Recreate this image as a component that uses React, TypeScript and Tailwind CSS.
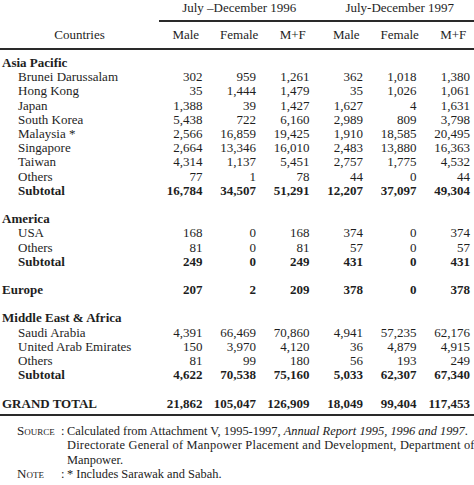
type Row = {
  label: string;
  vals?: string[];
  kind: "cat" | "item" | "sub" | "blank" | "grand";
};

const rows: Row[] = [
  { label: "Asia Pacific", kind: "cat" },
  { label: "Brunei Darussalam", kind: "item", vals: ["302", "959", "1,261", "362", "1,018", "1,380"] },
  { label: "Hong Kong", kind: "item", vals: ["35", "1,444", "1,479", "35", "1,026", "1,061"] },
  { label: "Japan", kind: "item", vals: ["1,388", "39", "1,427", "1,627", "4", "1,631"] },
  { label: "South Korea", kind: "item", vals: ["5,438", "722", "6,160", "2,989", "809", "3,798"] },
  { label: "Malaysia *", kind: "item", vals: ["2,566", "16,859", "19,425", "1,910", "18,585", "20,495"] },
  { label: "Singapore", kind: "item", vals: ["2,664", "13,346", "16,010", "2,483", "13,880", "16,363"] },
  { label: "Taiwan", kind: "item", vals: ["4,314", "1,137", "5,451", "2,757", "1,775", "4,532"] },
  { label: "Others", kind: "item", vals: ["77", "1", "78", "44", "0", "44"] },
  { label: "Subtotal", kind: "sub", vals: ["16,784", "34,507", "51,291", "12,207", "37,097", "49,304"] },
  { label: "", kind: "blank" },
  { label: "America", kind: "cat" },
  { label: "USA", kind: "item", vals: ["168", "0", "168", "374", "0", "374"] },
  { label: "Others", kind: "item", vals: ["81", "0", "81", "57", "0", "57"] },
  { label: "Subtotal", kind: "sub", vals: ["249", "0", "249", "431", "0", "431"] },
  { label: "", kind: "blank" },
  { label: "Europe", kind: "grand", vals: ["207", "2", "209", "378", "0", "378"] },
  { label: "", kind: "blank" },
  { label: "Middle East & Africa", kind: "cat" },
  { label: "Saudi Arabia", kind: "item", vals: ["4,391", "66,469", "70,860", "4,941", "57,235", "62,176"] },
  { label: "United Arab Emirates", kind: "item", vals: ["150", "3,970", "4,120", "36", "4,879", "4,915"] },
  { label: "Others", kind: "item", vals: ["81", "99", "180", "56", "193", "249"] },
  { label: "Subtotal", kind: "sub", vals: ["4,622", "70,538", "75,160", "5,033", "62,307", "67,340"] },
  { label: "", kind: "blank" },
  { label: "GRAND TOTAL", kind: "grand", vals: ["21,862", "105,047", "126,909", "18,049", "99,404", "117,453"] },
];

const heads = ["Male", "Female", "M+F", "Male", "Female", "M+F"];

export default function App() {
  return (
    <div className="w-[474px] h-[485px] overflow-hidden bg-white text-[#1e1e1e] font-['Liberation_Serif',serif]">
      <table className="w-[480px] table-fixed border-collapse text-[13px]">
        <colgroup>
          <col className="w-[159px]" />
          {heads.map((_, i) => (
            <col key={i} className="w-[53.5px]" />
          ))}
        </colgroup>
        <thead>
          <tr className="h-[21px]">
            <th className="font-normal"></th>
            <th colSpan={3} className="font-normal text-center align-top leading-[15px] border-b-[2px] border-[#2a2a2a]">
              July –December 1996
            </th>
            <th colSpan={3} className="font-normal text-center align-top leading-[15px] border-b-[2px] border-[#2a2a2a]">
              July-December 1997
            </th>
          </tr>
          <tr className="h-[28px] border-b-[2px] border-[#2a2a2a]">
            <th className="font-normal text-center">Countries</th>
            {heads.map((h, i) => (
              <th key={i} className="font-normal text-center">
                {h}
              </th>
            ))}
          </tr>
        </thead>
        <tbody>
          <tr className="h-[7px]">
            <td colSpan={7}></td>
          </tr>
          {rows.map((r, i) => {
            const bold = r.kind === "cat" || r.kind === "sub" || r.kind === "grand";
            return (
              <tr key={i} className={`h-[14.2px] leading-[14px] ${bold ? "font-bold" : ""}`}>
                <td className={`whitespace-nowrap ${r.kind === "item" || r.kind === "sub" ? "pl-[18px]" : "pl-[2px]"}`}>
                  {r.label}
                </td>
                {(r.vals ?? ["", "", "", "", "", ""]).map((v, j) => (
                  <td key={j} className="text-right pr-[10px]">
                    {v}
                  </td>
                ))}
              </tr>
            );
          })}
          <tr className="h-[4px] border-b-[2px] border-[#2a2a2a]">
            <td colSpan={7}></td>
          </tr>
        </tbody>
      </table>

      <div className="pt-[8px] pl-[17px] text-[12.4px] leading-[14.5px] text-[#222]">
        <div className="flex">
          <span className="w-[44px] shrink-0 text-[13px] [font-variant:small-caps]">Source</span>
          <span className="w-[4px] shrink-0">:</span>
          <span className="pl-[2px] whitespace-nowrap">
            Calculated from Attachment V, 1995-1997, <i>Annual Report 1995, 1996 and 1997</i>.
            <br />
            <span className="tracking-[0.22px]">
              Directorate General of Manpower Placement and Development, Department of
            </span>
            <br />
            Manpower.
          </span>
        </div>
        <div className="flex">
          <span className="w-[44px] shrink-0 text-[13px] [font-variant:small-caps]">Note</span>
          <span className="w-[4px] shrink-0">:</span>
          <span className="pl-[2px]">* Includes Sarawak and Sabah.</span>
        </div>
      </div>
    </div>
  );
}
